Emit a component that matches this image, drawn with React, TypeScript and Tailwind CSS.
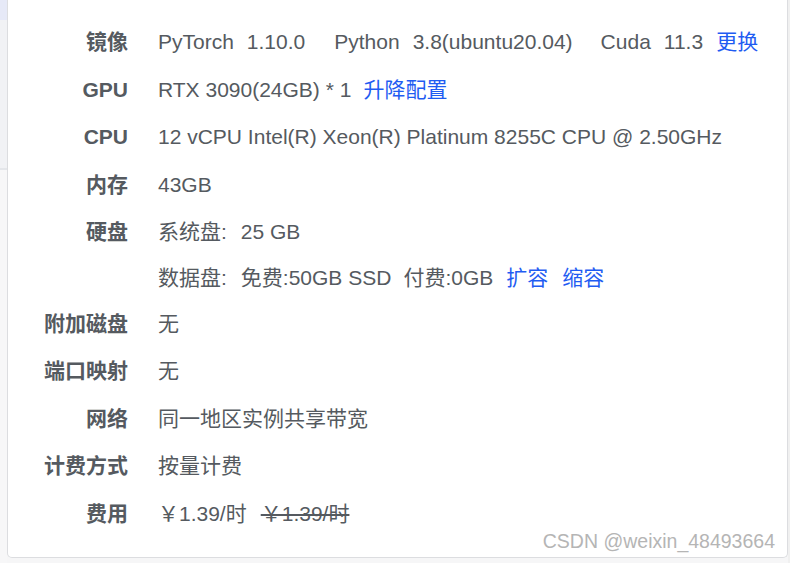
import React from "react";

const font = { fontFamily: '"Liberation Sans", "Noto Sans CJK SC", sans-serif' };

function Row({ label, children, h = "h-[47.5px]" }: { label: string; children: React.ReactNode; h?: string }) {
  return (
    <div className={`flex items-center ${h}`}>
      <div className="w-[120px] shrink-0 text-right font-bold text-[#555a60]">{label}</div>
      <div className="ml-[30px] flex items-center whitespace-pre text-[#555a60]">{children}</div>
    </div>
  );
}

const Link = ({ children, className = "" }: { children: React.ReactNode; className?: string }) => (
  <span className={`text-[#1f5cf2] ${className}`}>{children}</span>
);

export default function App() {
  return (
    <div className="flex w-[790px] h-[563px] bg-[#f6f6f7] overflow-hidden" style={font}>
      <div className="w-[7px] shrink-0 flex flex-col">
        <div className="h-[20px] bg-[#e6e9f7]" />
        <div className="h-[150px] bg-[#f1f2f5] border-b-[2px] border-[#e4e6ea]" />
        <div className="flex-1 bg-[#f7f7f8]" />
      </div>
      <div className="w-[781px] h-[558px] shrink-0 bg-white border-l border-r border-b border-[#dcdde0] rounded-b-[5px] relative pt-[18px] text-[21px]">
        <Row label="镜像">
          <span>PyTorch</span>
          <span className="ml-[13px]">1.10.0</span>
          <span className="ml-[29px]">Python</span>
          <span className="ml-[13px]">3.8(ubuntu20.04)</span>
          <span className="ml-[28px]">Cuda</span>
          <span className="ml-[13px]">11.3</span>
          <Link className="ml-[13px]">更换</Link>
        </Row>
        <Row label="GPU">
          <span>RTX 3090(24GB) * 1</span>
          <Link className="ml-[12px]">升降配置</Link>
        </Row>
        <Row label="CPU">
          <span>12 vCPU Intel(R) Xeon(R) Platinum 8255C CPU @ 2.50GHz</span>
        </Row>
        <Row label="内存">
          <span>43GB</span>
        </Row>
        <Row label="硬盘">
          <span>系统盘:</span>
          <span className="ml-[14px]">25 GB</span>
        </Row>
        <Row label="" h="h-[44px]">
          <span>数据盘:</span>
          <span className="ml-[14px]">免费:50GB SSD</span>
          <span className="ml-[12px]">付费:0GB</span>
          <Link className="ml-[13px]">扩容</Link>
          <Link className="ml-[14px]">缩容</Link>
        </Row>
        <Row label="附加磁盘">
          <span>无</span>
        </Row>
        <Row label="端口映射">
          <span>无</span>
        </Row>
        <Row label="网络">
          <span>同一地区实例共享带宽</span>
        </Row>
        <Row label="计费方式">
          <span>按量计费</span>
        </Row>
        <Row label="费用">
          <span>￥1.39/时</span>
          <span className="ml-[14px] line-through">￥1.39/时</span>
        </Row>
        <div className="absolute right-[12px] bottom-[1px] text-[19.5px] text-[#b5b5b5]">CSDN @weixin_48493664</div>
      </div>
      <div className="flex-1 bg-[#f0f0f0]" />
    </div>
  );
}
